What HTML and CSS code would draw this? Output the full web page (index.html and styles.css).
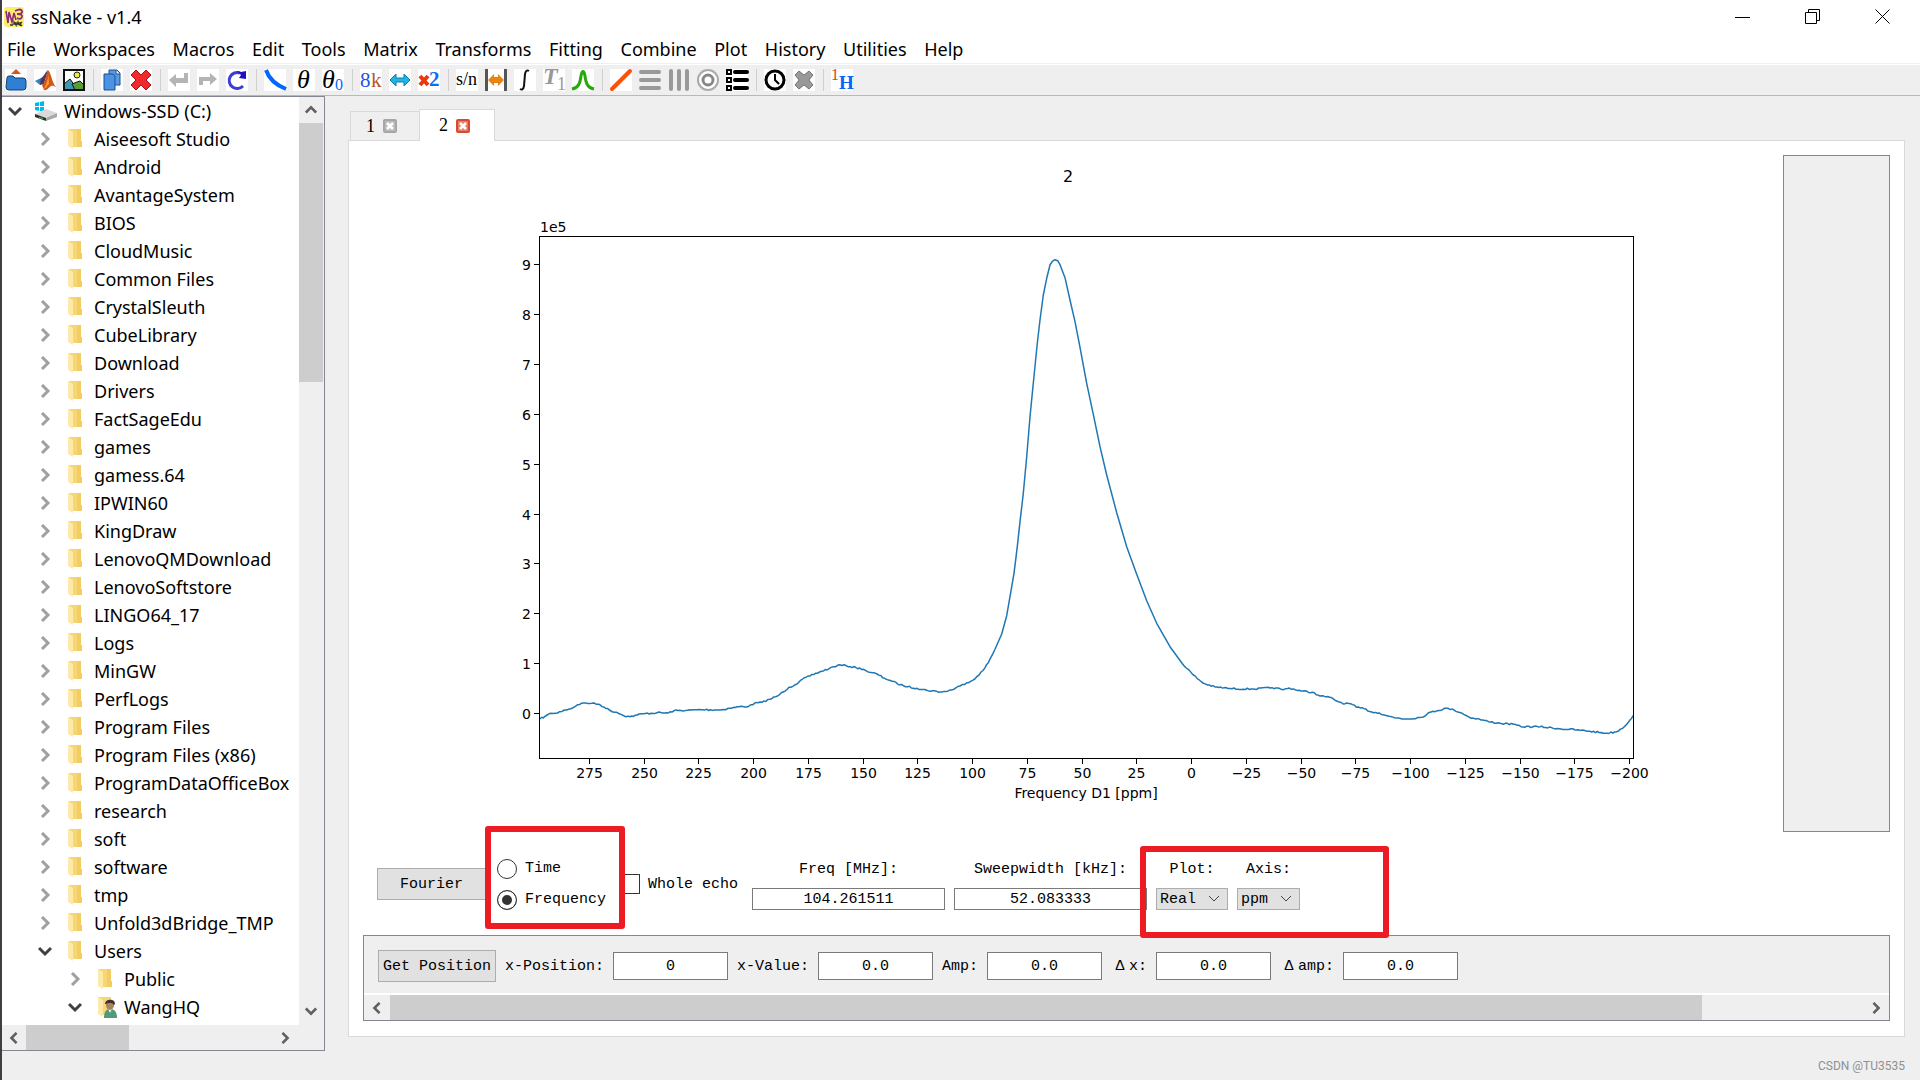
FILE: index.html
```html
<!DOCTYPE html>
<html lang="en">
<head>
    <meta charset="UTF-8">
    <meta name="viewport" content="width=device-width, initial-scale=1.0">
    <title>ssNake - v1.4</title>
    <link rel="stylesheet" href="styles.css">
</head>
<body>
    <svg class="symbols" aria-hidden="true">
        <symbol id="right" viewBox="0 0 14 14"><path d="M4 1L10 7L4 13" fill="none" stroke="currentColor" stroke-width="3"/></symbol>
        <symbol id="left" viewBox="0 0 14 14"><path d="M10 1L4 7L10 13" fill="none" stroke="currentColor" stroke-width="3"/></symbol>
        <symbol id="down" viewBox="0 0 14 14"><path d="M1 4L7 10L13 4" fill="none" stroke="currentColor" stroke-width="3"/></symbol>
        <symbol id="up" viewBox="0 0 14 14"><path d="M1 10L7 4L13 10" fill="none" stroke="currentColor" stroke-width="3"/></symbol>
        <symbol id="folder" viewBox="0 0 24 24">
            <path d="M5 2h12v12h1v6H8z" fill="#f7d774"/>
            <path d="M13 2h4v12l1 1v5h-5z" fill="#f3cc63"/>
            <path d="M4 2l5 3v17l-5-3z" fill="#ffe9a8"/>
        </symbol>
        <symbol id="user" viewBox="0 0 24 24">
            <path d="M5 2h12v18H8z" fill="#f7d774"/>
            <path d="M4 2l5 3v17l-5-3z" fill="#ffe9a8"/>
            <path d="M10 23c0-6 2-9 6-9s7 2 7 9z" fill="#4f9a78"/>
            <path d="M14 14l2 4 2-4z" fill="#e8eef0"/>
            <ellipse cx="16" cy="10" rx="4" ry="5" fill="#a9825e"/>
            <path d="M11 9c0-5 10-6 10 0l-1 1c-2-3-5-2-9-1z" fill="#3b3431"/>
        </symbol>
        <symbol id="drive" viewBox="0 0 24 24">
            <path d="M1 4l4-1v4H1zM6 3l4-1v5H6zM1 8h4v4l-4-1zM6 8h4v5l-4-1z" fill="#00b7ee"/>
            <path d="M1 15l11-5 11 4-11 5z" fill="#d9d9d9"/>
            <path d="M12 19l11-5v4l-11 4z" fill="#a8a8a8"/>
            <path d="M1 15l11 4v3L1 18z" fill="#2c2f2d"/>
            <path d="M5 18l4 1v1l-4-1z" fill="#35d04e"/>
        </symbol>
        <symbol id="close" viewBox="0 0 14 14">
            <rect x="1" y="1" width="12" height="12" rx="1" fill="currentColor" fill-opacity=".7" stroke="currentColor" stroke-width="2"/>
            <path d="M4 4l6 6M10 4l-6 6" stroke="#fff" stroke-width="2.6"/>
        </symbol>
    </svg>

    <header class="titlebar">
        <svg class="logo" viewBox="0 0 22 22">
            <rect x="1" y="1" width="20" height="20" rx="3" fill="#fbee6c"/>
            <path d="M3 5l2 12 1-11 3 10 2-9 2 7" fill="none" stroke="#8e2a80" stroke-width="1.6"/>
            <path d="M12 5q6-3 7 0t-5 3q6 0 5 3t-5 1" fill="none" stroke="#8e2a80" stroke-width="1.8"/>
            <path d="M7 19h3M11 19v-3l2 3v-3M14 19l1-3 1 3M17 16v4M19 16l-2 2 2 2" fill="none" stroke="#333" stroke-width="1.3"/>
        </svg>
        <h1>ssNake - v1.4</h1>
        <div class="window-buttons">
            <button aria-label="Minimize"><svg viewBox="0 0 16 16"><path d="M0 8.5h15"/></svg></button>
            <button aria-label="Restore"><svg viewBox="0 0 16 16"><path d="M.5 3.5h11v11H.5zM3.5 3.5v-3h11v11h-3"/></svg></button>
            <button aria-label="Close"><svg viewBox="0 0 16 16"><path d="M.5.5l14 14M14.5.5l-14 14"/></svg></button>
        </div>
    </header>

    <nav class="menubar">
        <div class="menu">
            <button>File</button>
            <button>Workspaces</button>
            <button>Macros</button>
            <button>Edit</button>
            <button>Tools</button>
            <button>Matrix</button>
            <button>Transforms</button>
            <button>Fitting</button>
            <button>Combine</button>
            <button>Plot</button>
            <button>History</button>
            <button>Utilities</button>
            <button>Help</button>
        </div>
    </nav>

    <div class="toolbar">
        <button aria-label="Open"><svg viewBox="0 0 22 22"><path d="M6 5l5-5 5 5z" fill="#d9541e"/><path d="M2 9q0-2 2-2h4l2 2h8q3 0 3 3v6q0 3-3 3H4q-3 0-3-3z" fill="#2f7fd3" stroke="#123c70"/></svg></button>
        <button aria-label="Save MATLAB"><svg viewBox="0 0 22 22"><path d="M1 12l6-3 3 3-4 4z" fill="#2f86b8"/><path d="M7 9c3-1 4-6 7-8l-4 14-4 1z" fill="#4b3a5c"/><path d="M14 1c3 2 4 13 8 17-3-1-4-2-6 0-2 1-3 4-6 3l-2-5c4-3 4-11 6-15z" fill="#d6541c"/><path d="M14 2c1 6-1 12-4 18 3-1 3-4 5-5z" fill="#f5a12c"/></svg></button>
        <button aria-label="Save figure"><svg viewBox="0 0 22 22"><rect x="1" y="1" width="20" height="20" fill="#fff"/><path d="M1 15l6-5 8 11H1z" fill="#3b9ab8" stroke="#111"/><path d="M9 15l5-2 3-1 4 4v5H12z" fill="#5a9b35" stroke="#111"/><circle cx="14" cy="6" r="3" fill="#f4e83a" stroke="#222"/><rect x="1" y="1" width="20" height="20" fill="none" stroke="#111" stroke-width="2"/></svg></button>
        <i></i>
        <button aria-label="Copy"><svg viewBox="0 0 22 22"><path d="M8 1h8l3 3v12H8z" fill="#5b9ae0" stroke="#1a4f96"/><path d="M3 5h9l2 2v14H3z" fill="#4d93e3" stroke="#1a4f96"/><path d="M15 1v4h4" fill="#fff" stroke="#1a4f96"/></svg></button>
        <button aria-label="Delete"><svg viewBox="0 0 22 22"><path d="M6 1l5 5 5-5 5 5-5 5 5 5-5 5-5-5-5 5-5-5 5-5-5-5z" fill="#f0292c" stroke="#a81115" stroke-linejoin="round"/></svg></button>
        <i></i>
        <button aria-label="Undo"><svg viewBox="0 0 22 22"><path d="M1 11l7-6v4h8V4h4v10H8v4z" fill="#b4b4b4"/></svg></button>
        <button aria-label="Redo"><svg viewBox="0 0 22 22"><path d="M20 10l-7-6v4H2v8h4v-4h7v4z" fill="#b4b4b4"/></svg></button>
        <button aria-label="Reload"><svg viewBox="0 0 22 22"><path d="M14 4A8 8 0 1 0 17 17" fill="none" stroke="#3b3bd6" stroke-width="3"/><path d="M11 2l4 1 5-1v8l-7-1 2-3z" fill="#1c10c4"/></svg></button>
        <i></i>
        <button aria-label="Apodize"><svg viewBox="0 0 22 22"><path d="M2 1c3 9 10 15 20 19" fill="none" stroke="#0068ff" stroke-width="4"/></svg></button>
        <button aria-label="Phasing"><svg viewBox="0 0 22 22"><text class="math" x="4" y="19" font-size="26">θ</text></svg></button>
        <button aria-label="Autophase"><svg viewBox="0 0 22 22"><text class="math" x="0" y="19" font-size="26">θ</text><text x="13" y="21" font-size="16" fill="#0068ff">0</text></svg></button>
        <i></i>
        <button aria-label="Sizing"><svg viewBox="0 0 22 22"><text x="0" y="18" font-size="21" fill="#2452e0">8</text><text x="11" y="18" font-size="21" fill="#b8552a">k</text></svg></button>
        <button aria-label="Shift"><svg viewBox="0 0 22 22"><path d="M1 11l6-6v4h8V5l6 6-6 6v-4H7v4z" fill="#1bb6e8" stroke="#177d9f"/></svg></button>
        <button aria-label="Multiply"><svg viewBox="0 0 22 22"><path d="M2 7l8 9M10 7l-8 9" stroke="#e83a08" stroke-width="4"/><text x="11" y="17" font-size="21" font-weight="bold" fill="#0f6cf5">2</text></svg></button>
        <i></i>
        <button aria-label="Signal to noise"><svg viewBox="0 0 22 22"><text x="0" y="16" font-size="18">s/n</text></svg></button>
        <button aria-label="Width"><svg viewBox="0 0 22 22"><path d="M1.500 0v22M20.500 0v22" stroke="#555" stroke-width="3"/><path d="M3 11l6-6v3h4V5l6 6-6 6v-3H9v3z" fill="#e88412"/></svg></button>
        <button aria-label="Integrate"><svg viewBox="0 0 22 22"><path d="M15 2q-3-2-4 3l-1 12q-1 5-4 3" fill="none" stroke="#111" stroke-width="2"/></svg></button>
        <button aria-label="Relaxation"><svg viewBox="0 0 22 22"><text x="0" y="15" font-size="24" font-style="italic" font-weight="bold" fill="#999">T</text><text x="14" y="21" font-size="18" fill="#999">1</text></svg></button>
        <button aria-label="Lorentzian"><svg viewBox="0 0 22 22"><path d="M0 20c6-1 8-5 9-13 1-6 3-6 4 0 1 8 3 12 9 13" fill="none" stroke="#27a80a" stroke-width="3"/></svg></button>
        <i></i>
        <button aria-label="1D plot"><svg viewBox="0 0 22 22"><path d="M2 20L20 2" stroke="#ff5008" stroke-width="4" stroke-linecap="round"/></svg></button>
        <button class="bare" aria-label="Stack plot"><svg viewBox="0 0 22 22"><path d="M2 3h18M2 11h18M2 19h18" stroke="#999" stroke-width="4" stroke-linecap="round"/></svg></button>
        <button class="bare" aria-label="Array plot"><svg viewBox="0 0 22 22"><path d="M3 2v18M11 2v18M19 2v18" stroke="#999" stroke-width="4" stroke-linecap="round"/></svg></button>
        <button class="bare" aria-label="Contour plot"><svg viewBox="0 0 22 22"><circle cx="11" cy="11" r="10" fill="#fff" stroke="#aaa" stroke-width="2"/><circle cx="11" cy="11" r="5" fill="#fff" stroke="#888" stroke-width="3"/></svg></button>
        <button aria-label="Multi plot"><svg viewBox="0 0 22 22"><path d="M9 3h12M9 11h12M9 19h12" stroke="#000" stroke-width="4" stroke-linecap="round"/><path d="M1 1h4v4H1zM1 9h4v4H1zM1 17h4v4H1z" fill="#fff" stroke="#000" stroke-width="2"/></svg></button>
        <i></i>
        <button aria-label="History"><svg viewBox="0 0 22 22"><circle cx="11" cy="11" r="9" fill="#fff" stroke="#000" stroke-width="3"/><path d="M11 5v6l4 4" fill="none" stroke="#000" stroke-width="2"/></svg></button>
        <button aria-label="Clear history"><svg viewBox="0 0 22 22"><path d="M6 2l5 4 5-4 4 4-4 5 4 5-4 4-5-4-5 4-4-4 4-5-4-5z" fill="#999" stroke="#777" stroke-linejoin="round"/></svg></button>
        <i></i>
        <button aria-label="NMR table"><svg viewBox="0 0 22 22"><text x="0" y="11" font-size="16" fill="#e63c12">1</text><text x="8" y="20" font-size="19" font-weight="bold" fill="#0a64f0">H</text></svg></button>
    </div>

    <main>
        <aside class="browser">
            <ul class="tree"></ul>
            <div class="vbar">
                <button aria-label="Scroll up"><svg><use href="#up"/></svg></button>
                <div class="thumb"></div>
                <button aria-label="Scroll down"><svg><use href="#down"/></svg></button>
            </div>
            <div class="hbar">
                <button aria-label="Scroll left"><svg><use href="#left"/></svg></button>
                <div class="thumb"></div>
                <button aria-label="Scroll right"><svg><use href="#right"/></svg></button>
            </div>
        </aside>

        <section class="workspace">
            <div class="tabs">
                <div class="tab"><button>1</button><button class="close" aria-label="Close 1"><svg><use href="#close"/></svg></button></div>
                <div class="tab active"><button>2</button><button class="close" aria-label="Close 2"><svg><use href="#close"/></svg></button></div>
            </div>
            <div class="pane">
                <div class="figure">
                    <svg class="plot" viewBox="363 155 1411 677">
                        <text class="title" x="1068" y="182">2</text>
                        <text class="scale" x="540" y="232">1e5</text>
                        <g class="xticks"></g>
                        <g class="yticks"></g>
                        <text class="xlabel" x="1086" y="798">Frequency D1 [ppm]</text>
                        <path class="curve"/>
                        <rect class="frame" x="539.5" y="236.5" width="1094" height="522"/>
                    </svg>
                    <div class="list"></div>
                </div>

                <form class="controls">
                    <button type="button" class="push fourier">Fourier</button>
                    <div class="domain">
                        <label><input type="radio" name="domain">Time</label>
                        <label><input type="radio" name="domain" checked>Frequency</label>
                    </div>
                    <label class="echo"><input type="checkbox">Whole echo</label>
                    <div class="field wide">
                        <label for="freq">Freq [MHz]:</label>
                        <input id="freq" type="text" value="104.261511">
                    </div>
                    <div class="field wide">
                        <label for="sw">Sweepwidth [kHz]:</label>
                        <input id="sw" type="text" value="52.083333">
                    </div>
                    <div class="field">
                        <label for="plot">Plot:</label>
                        <span class="drop"><select id="plot"><option>Real</option></select><svg viewBox="0 0 12 8"><path d="M1 1l5 5 5-5"/></svg></span>
                    </div>
                    <div class="field">
                        <label for="axis">Axis:</label>
                        <span class="drop"><select id="axis"><option>ppm</option></select><svg viewBox="0 0 12 8"><path d="M1 1l5 5 5-5"/></svg></span>
                    </div>
                    <span class="mark mark-domain"></span>
                    <span class="mark mark-view"></span>
                </form>

                <div class="position">
                    <div class="values">
                        <button class="push">Get Position</button>
                        <label for="xpos">x-Position:</label>
                        <input id="xpos" type="text" value="0">
                        <label for="xval">x-Value:</label>
                        <input id="xval" type="text" value="0.0">
                        <label for="amp">Amp:</label>
                        <input id="amp" type="text" value="0.0">
                        <label for="dx"><span class="delta">Δ</span>x:</label>
                        <input id="dx" type="text" value="0.0">
                        <label for="damp"><span class="delta">Δ</span>amp:</label>
                        <input id="damp" type="text" value="0.0">
                    </div>
                    <div class="hbar">
                        <button aria-label="Scroll left"><svg><use href="#left"/></svg></button>
                        <div class="thumb"></div>
                        <button aria-label="Scroll right"><svg><use href="#right"/></svg></button>
                    </div>
                </div>
            </div>
            <footer>CSDN @TU3535</footer>
        </section>
    </main>
    <script src="script.js"></script>
</body>
</html>
```
FILE: styles.css
```css
*{
    margin: 0;
    padding: 0;
    box-sizing: border-box;
}
body{
    height: 100vh;
    display: flex;
    flex-direction: column;
    overflow: hidden;
    border-left: 2px solid #3f3f42;
    background-color: white;
    color: black;
    font-family: "Noto Sans", "Open Sans", sans-serif;
    font-size: 18px;
}
button{
    border: none;
    background: none;
    color: inherit;
    font: inherit;
}
svg{
    display: block;
}
.symbols{
    position: absolute;
    width: 0;
    height: 0;
}

/* title bar and menu */
.titlebar{
    height: 34px;
    display: flex;
    align-items: center;
    padding: 0 2px 0 1px;
}
.logo{
    width: 22px;
    height: 22px;
}
.titlebar h1{
    flex: 1;
    padding-left: 6px;
    font-size: 18px;
    font-weight: normal;
}
.window-buttons{
    display: flex;
}
.window-buttons button{
    width: 70px;
    height: 32px;
    display: grid;
    place-items: center;
}
.window-buttons svg{
    width: 16px;
    height: 16px;
    fill: none;
    stroke: black;
}
.menubar{
    margin-bottom: 1px;
    padding-left: 5px;
    border-bottom: 1px solid #f0f0f0;
}
.menu{
    display: flex;
    justify-content: space-between;
    width: 50%;
    height: 29px;
}

/* toolbar */
.toolbar{
    display: flex;
    gap: 7px;
    padding: 4px 3px;
    background-color: #efefef;
    border-bottom: 1px solid #b9b9b9;
}
.toolbar button{
    width: 22px;
    height: 22px;
    background-color: white;
}
.toolbar .bare{
    background: none;
}
.toolbar svg{
    width: 22px;
    height: 22px;
    overflow: visible;
}
.toolbar text{
    font-family: "Liberation Serif", serif;
}
.toolbar .math{
    font-style: italic;
}
.toolbar i{
    width: 2px;
    border-right: 1px solid #cfcfcf;
}

/* file browser */
main{
    flex: 1;
    min-height: 0;
    display: flex;
    background-color: #efefef;
}
.browser{
    width: 323px;
    margin-bottom: 29px;
    display: grid;
    grid-template-columns: 1fr 25px;
    grid-template-rows: 1fr 25px;
    border: 1px solid #828790;
    border-left: none;
}
.tree{
    overflow: hidden;
    list-style: none;
    background-color: white;
}
.tree li{
    height: 28px;
    display: flex;
    align-items: center;
    gap: 6px;
    white-space: nowrap;
}
.tree .level1{
    padding-left: 30px;
}
.tree .level2{
    padding-left: 60px;
}
.tree button{
    width: 26px;
    display: grid;
    place-items: center;
    color: #a0a0a0;
}
.tree .open{
    color: #404040;
}
.tree button svg{
    width: 14px;
    height: 14px;
}
.tree li > svg{
    width: 24px;
    height: 24px;
}
.vbar, .hbar{
    display: flex;
    color: #606060;
}
.vbar{
    flex-direction: column;
    padding-bottom: 2px;
}
.browser .hbar{
    padding-right: 2px;
}
.vbar button, .hbar button{
    width: 24px;
    height: 25px;
    display: grid;
    place-items: center;
}
.vbar svg, .hbar svg{
    width: 12px;
    height: 12px;
}
.thumb{
    background-color: #cdcdcd;
}
.vbar .thumb{
    width: 24px;
    height: 28%;
    margin: 1px 0 auto;
}
.hbar .thumb{
    width: 35%;
    margin-right: auto;
}

/* workspace */
.workspace{
    flex: 1;
    min-width: 0;
    display: flex;
    flex-direction: column;
    padding: 13px 15px 0 23px;
    font-family: "Liberation Mono", "Noto Sans CJK SC", monospace;
    font-size: 15px;
}
.tabs{
    display: flex;
    align-items: flex-end;
    height: 32px;
    margin-bottom: -1px;
    padding-left: 2px;
}
.tab{
    height: 30px;
    display: flex;
    align-items: center;
    gap: 8px;
    padding: 0 22px 0 15px;
    border: 1px solid #d9d9d9;
    border-right: none;
}
.tab button{
    font-size: 18px;
    font-family: "Liberation Serif", serif;
}
.tab .close{
    color: #a6a6a6;
}
.tab svg{
    width: 14px;
    height: 14px;
}
.tab.active{
    position: relative;
    height: 32px;
    padding: 0 24px 0 19px;
    border-right: 1px solid #d9d9d9;
    border-bottom: none;
    background-color: white;
}
.active .close{
    color: #d8492f;
}
.pane{
    flex: 1;
    min-height: 0;
    display: flex;
    flex-direction: column;
    padding: 14px 14px 15px;
    border: 1px solid #d9d9d9;
    background-color: white;
}
.figure{
    flex: 1;
    min-height: 0;
    display: flex;
    gap: 9px;
}
.plot{
    flex: 1;
    min-width: 0;
    height: 100%;
    font-family: "DejaVu Sans", sans-serif;
    font-size: 14px;
    text-anchor: middle;
}
.plot .title{
    font-size: 16px;
}
.plot .scale{
    text-anchor: start;
}
.plot .yticks{
    text-anchor: end;
}
.plot line, .frame{
    fill: none;
    stroke: black;
    shape-rendering: crispEdges;
}
.curve{
    fill: none;
    stroke: #1f77b4;
    stroke-width: 1.5;
    stroke-linejoin: round;
}
.list{
    width: 107px;
    border: 1px solid #828790;
    background-color: #efefef;
}

/* controls under the plot */
.controls{
    position: relative;
    display: flex;
    align-items: center;
    gap: 9px;
    padding: 26px 14px 25px;
}
.push{
    height: 32px;
    border: 1px solid #adadad;
    background-color: #e1e1e1;
}
.fourier{
    width: 109px;
}
.domain{
    width: 116px;
    display: flex;
    flex-direction: column;
    gap: 11px;
    padding-left: 2px;
}
.domain label, .echo{
    display: flex;
    align-items: center;
    gap: 8px;
    height: 20px;
    white-space: nowrap;
}
.echo{
    width: 123px;
}
.controls input[type="radio"], .controls input[type="checkbox"]{
    appearance: none;
    flex: none;
    width: 20px;
    height: 20px;
    border: 1px solid #333;
    background-color: white;
}
.controls input[type="radio"]{
    border-radius: 50%;
}
.controls input[type="radio"]:checked{
    background-color: #333;
    border: 1px solid #333;
    box-shadow: inset 0 0 0 4px white;
}
.field{
    display: flex;
    flex-direction: column;
    align-items: center;
    gap: 6px;
}
.field label{
    line-height: 24px;
    white-space: nowrap;
}
.wide{
    width: 193px;
}
input[type="text"]{
    width: 100%;
    height: 22px;
    border: 1px solid #7a7a7a;
    background-color: white;
    font: inherit;
    text-align: center;
}
.drop{
    position: relative;
}
.drop select{
    display: block;
    appearance: none;
    height: 22px;
    padding: 0 30px 0 3px;
    border: 1px solid #adadad;
    background-color: #e1e1e1;
    color: black;
    font: inherit;
}
.drop svg{
    position: absolute;
    right: 8px;
    top: 7px;
    width: 12px;
    height: 8px;
    fill: none;
    stroke: #444;
    pointer-events: none;
}
.mark{
    position: absolute;
    border: 6px solid #ed1c24;
    border-radius: 3px;
    pointer-events: none;
}
.mark-domain{
    left: 122px;
    top: -6px;
    width: 140px;
    height: 103px;
}
.mark-view{
    left: 777px;
    top: 14px;
    width: 249px;
    height: 92px;
}

/* position readout */
.position{
    border: 1px solid #828790;
    background-color: #efefef;
}
.values{
    display: flex;
    align-items: center;
    gap: 9px;
    padding: 14px 14px 11px;
    border-bottom: 2px solid white;
}
.values .push{
    width: 118px;
}
.values input[type="text"]{
    width: 115px;
    height: 28px;
}
.delta{
    display: inline-block;
    width: 18px;
    text-align: center;
}
.position .hbar button{
    width: 26px;
}
.position .hbar .thumb{
    width: 86%;
}
footer{
    height: 43px;
    padding-top: 20px;
    color: #8f8f8f;
    font-family: Roboto, sans-serif;
    font-size: 12px;
    line-height: 18px;
    text-align: right;
}
```
FILE: script.js
```js
// directory tree: [level, name, open, icon]
const closed = ['Aiseesoft Studio', 'Android', 'AvantageSystem', 'BIOS', 'CloudMusic', 'Common Files',
    'CrystalSleuth', 'CubeLibrary', 'Download', 'Drivers', 'FactSageEdu', 'games', 'gamess.64', 'IPWIN60',
    'KingDraw', 'LenovoQMDownload', 'LenovoSoftstore', 'LINGO64_17', 'Logs', 'MinGW', 'PerfLogs',
    'Program Files', 'Program Files (x86)', 'ProgramDataOfficeBox', 'research', 'soft', 'software', 'tmp',
    'Unfold3dBridge_TMP'];
const rows = [[0, 'Windows-SSD (C:)', true, 'drive']];
closed.forEach(name => rows.push([1, name, false, 'folder']));
rows.push([1, 'Users', true, 'folder'], [2, 'Public', false, 'folder'], [2, 'WangHQ', true, 'user']);

document.querySelector('.tree').innerHTML = rows.map(([level, name, open, icon]) => `
    <li class="level${level}">
        <button class="${open ? 'open' : ''}" aria-label="Toggle ${name}"><svg><use href="#${open ? 'down' : 'right'}"/></svg></button>
        <svg><use href="#${icon}"/></svg>
        <span>${name}</span>
    </li>`).join('');

// axis ticks
let xticks = '';
for (let ppm = 275; ppm >= -200; ppm -= 25) {
    const x = Math.round(1191 - ppm * 2.19) + 0.5;
    const label = ppm < 0 ? '−' + -ppm : ppm;
    xticks += `<line x1="${x}" x2="${x}" y1="759" y2="764"/><text x="${x}" y="778">${label}</text>`;
}
document.querySelector('.xticks').innerHTML = xticks;

let yticks = '';
for (let v = 0; v <= 9; v++) {
    const y = Math.round(713 - v * 49.85) + 0.5;
    yticks += `<line x1="534" x2="539" y1="${y}" y2="${y}"/><text x="531" y="${y + 5}">${v}</text>`;
}
document.querySelector('.yticks').innerHTML = yticks;

// spectrum
const points = [[540, 719], [545, 716.3], [551, 713.3], [557.4, 713], [564.3, 710], [570.8, 708.7],
    [577.7, 704.7], [583.4, 703], [591.8, 703.3], [598.7, 704.3], [604, 707], [611, 711], [616.7, 712.3],
    [623, 715.3], [630, 716.7], [637, 715], [643.5, 713.7], [657, 712.7], [668.4, 713], [674, 710.7],
    [687.5, 710.3], [703, 709.7], [720, 710], [729.6, 708.3], [739, 706.7], [748.8, 706.3], [754.5, 703.3],
    [762, 702.3], [769.8, 699.3], [777.5, 696], [783, 692], [789, 687.3], [794.7, 685], [802.3, 679.3],
    [810, 676], [819.6, 672], [829, 668.7], [837.5, 665.3], [846.3, 665.7], [856, 667.7], [863.6, 669.3],
    [869.3, 672.3], [877, 674], [884.6, 678.3], [892.3, 681.3], [900, 684.7], [907.6, 686.7], [917, 688.3],
    [926.7, 690.3], [942, 692], [951.6, 690], [960, 686], [966.7, 682.7], [972.6, 680.3], [977, 676.5],
    [983, 670.5], [988.3, 662.7], [995, 649.3], [1001.7, 634], [1006.7, 615.7], [1010, 596.7], [1014, 573.3],
    [1017.3, 546.7], [1020, 521.7], [1023.3, 493.3], [1026.7, 456.7], [1030, 416.7], [1033.3, 383.3],
    [1037.3, 343.3], [1040, 320], [1043.3, 295], [1046.7, 278.3], [1050, 265], [1052.3, 261.3],
    [1055, 259.7], [1057.7, 260.7], [1060, 264.7], [1065, 277.7], [1070, 300], [1075, 321.7], [1080, 347.3],
    [1086.7, 383.3], [1093.3, 414.3], [1100, 446.7], [1106.7, 475], [1116.7, 512.7], [1126.7, 546.7],
    [1136.7, 574.3], [1146.7, 600.7], [1156.7, 623.3], [1170, 646.7], [1181.7, 662.7], [1193.3, 675],
    [1203.3, 683.3], [1215, 687], [1232, 688.7], [1253, 689], [1272, 687.7], [1283.7, 689.7], [1289.4, 688],
    [1301, 691], [1312.4, 692.3], [1320, 696], [1329.6, 697.3], [1337.3, 701.3], [1345, 703.7],
    [1350.7, 703.7], [1356.4, 707.3], [1364, 708.7], [1371.7, 712], [1379.4, 713], [1387, 715.7],
    [1394.7, 717.7], [1406, 719], [1421.5, 717.3], [1431, 712], [1446.3, 708.3], [1454, 710], [1461.7, 713],
    [1469.3, 717.3], [1477, 718.7], [1490.4, 722], [1500, 723.3], [1513.3, 724.3], [1521, 726.7],
    [1540, 726.7], [1559.2, 728.7], [1574.6, 729.7], [1589.8, 731.3], [1607, 733.3], [1616.6, 731.7],
    [1624.3, 726.7], [1630, 720], [1633, 715.7]];

let seed = 7;
function noise() {
    seed = (seed * 16807) % 2147483647;
    return seed / 2147483647 - 0.5;
}

let d = 'M' + points[0].join(' ');
for (let i = 1; i < points.length; i++) {
    const [x0, y0] = points[i - 1];
    const [x1, y1] = points[i];
    const steps = Math.round((x1 - x0) / 2);
    // the baseline is noisy, the peak is not
    if (y0 > 660) {
        for (let s = 1; s < steps; s++) {
            const t = s / steps;
            d += `L${(x0 + (x1 - x0) * t).toFixed(1)} ${(y0 + (y1 - y0) * t + noise() * 1.6).toFixed(1)}`;
        }
    }
    d += `L${x1} ${y1}`;
}
document.querySelector('.curve').setAttribute('d', d);
```
